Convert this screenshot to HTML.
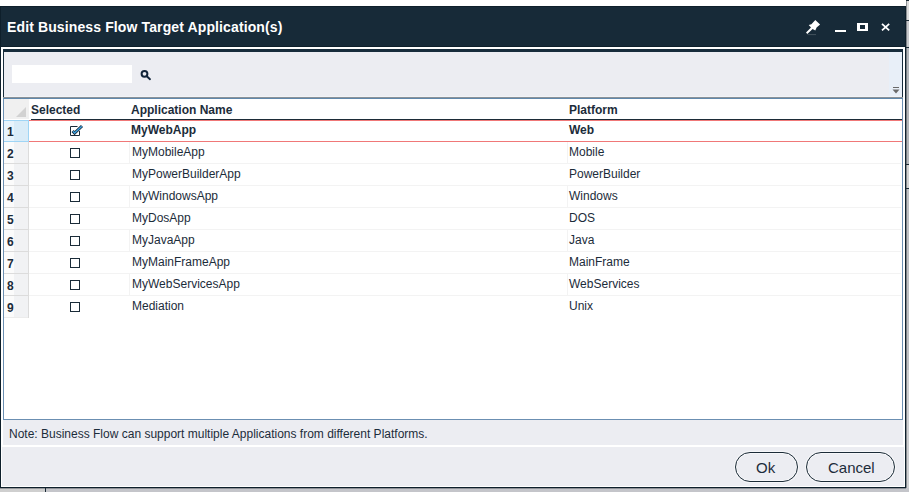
<!DOCTYPE html>
<html><head><meta charset="utf-8">
<style>
*{margin:0;padding:0;box-sizing:border-box}
html,body{width:909px;height:492px;overflow:hidden;background:#fff;font-family:"Liberation Sans",sans-serif}
.a{position:absolute}
.t{position:absolute;white-space:nowrap;font-size:12px;line-height:14px;color:#1c2c3a}
.b{font-weight:bold}
</style></head><body>
<div class="a" style="left:906px;top:0px;width:3px;height:1px;background:#1a2a35"></div>
<div class="a" style="left:906px;top:1px;width:3px;height:19px;background:#dcdcdc"></div>
<div class="a" style="left:906px;top:20px;width:3px;height:1px;background:#1a2a35"></div>
<div class="a" style="left:906px;top:21px;width:3px;height:26px;background:#c8c9cc"></div>
<div class="a" style="left:906px;top:47px;width:3px;height:1px;background:#1a2a35"></div>
<div class="a" style="left:906px;top:48px;width:3px;height:116px;background:#b4b7bb"></div>
<div class="a" style="left:906px;top:164px;width:3px;height:1px;background:#1a2a35"></div>
<div class="a" style="left:906px;top:165px;width:3px;height:23px;background:#d2d2d2"></div>
<div class="a" style="left:906px;top:188px;width:3px;height:1px;background:#1a2a35"></div>
<div class="a" style="left:906px;top:189px;width:3px;height:181px;background:#bfc1c5"></div>
<div class="a" style="left:906px;top:370px;width:3px;height:122px;background:#cfd0d2"></div>
<div class="a" style="left:906px;top:0;width:1px;height:492px;background:rgba(40,50,60,.45)"></div>
<div class="a" style="left:0;top:488px;width:909px;height:4px;background:#cfcfcf"></div>
<div class="a" style="left:46px;top:488px;width:863px;height:4px;background:#c4c5ca"></div>
<div class="a" style="left:0;top:488px;width:906px;height:1px;background:rgba(40,50,60,.35)"></div>
<div class="a" style="left:45px;top:488px;width:1px;height:4px;background:#1a2a35"></div>
<div class="a" style="left:0;top:6px;width:906px;height:482px;background:#0e1f2b"></div>
<div class="a" style="left:1px;top:7px;width:904px;height:39px;background:#172a38"></div>
<div class="a" style="left:1px;top:47px;width:904px;height:440px;background:#fff"></div>
<div class="t b" style="left:7px;top:19px;font-size:14px;line-height:16px;color:#fff;letter-spacing:0.12px">Edit Business Flow Target Application(s)</div>
<svg class="a" style="left:803px;top:17px" width="20" height="20" viewBox="0 0 20 20"><path d="M12.3 3L17.1 7.5L13.6 10.6L12.3 13.5L9.6 12L4.3 17L3 15.6L8 10.6L5.7 8L8.4 7.3Z" fill="#fff"/><path d="M4.5 17.6H13" stroke="#56646e" stroke-width="0.7"/></svg>
<div class="a" style="left:835px;top:30px;width:11px;height:2px;background:#fff"></div>
<div class="a" style="left:857px;top:23px;width:11px;height:8px;border-style:solid;border-color:#fff;border-width:2px 3px"></div>
<svg class="a" style="left:880px;top:22px" width="11" height="10" viewBox="0 0 11 10"><path d="M2 1.8L9.2 8.4M9.2 1.8L2 8.4" stroke="#fff" stroke-width="1.8"/></svg>
<div class="a" style="left:3px;top:49px;width:900px;height:371px;background:#172c3c"></div>
<div class="a" style="left:4px;top:52px;width:898px;height:45px;background:#ecedf2"></div>
<div class="a" style="left:889px;top:52px;width:13px;height:45px;background:#e8eff8"></div>
<div class="a" style="left:12px;top:65px;width:120px;height:18px;background:#fff"></div>
<svg class="a" style="left:138px;top:67px" width="16" height="16" viewBox="0 0 16 16"><circle cx="6.5" cy="6.8" r="2.9" fill="none" stroke="#12253a" stroke-width="2"/><path d="M8.8 9.2L12 12.2" stroke="#12253a" stroke-width="1.9" stroke-linecap="round"/></svg>
<div class="a" style="left:893px;top:87px;width:6px;height:1px;background:#6a6a6a"></div>
<svg class="a" style="left:892px;top:89px" width="8" height="6" viewBox="0 0 8 6"><path d="M0.5 0.5H7.5L4 4.5Z" fill="#6a6a6a"/></svg>
<div class="a" style="left:3px;top:97px;width:900px;height:323px;background:#6b8fb2"></div>
<div class="a" style="left:4px;top:99px;width:898px;height:320px;background:#fff"></div>
<div class="a" style="left:3px;top:97px;width:900px;height:1px;background:#8a9197"></div>
<div class="a" style="left:3px;top:98px;width:900px;height:1px;background:#5f87ab"></div>
<div class="a" style="left:4px;top:96px;width:898px;height:1px;background:#f1f3f7"></div>
<div class="a" style="left:4px;top:99px;width:25px;height:20px;background:#f0f0f0"></div>
<svg class="a" style="left:16px;top:107px" width="11" height="10" viewBox="0 0 11 10"><path d="M10 0V10H0Z" fill="#d2d2d2"/></svg>
<div class="t b" style="left:31px;top:103px">Selected</div>
<div class="t b" style="left:131px;top:103px">Application Name</div>
<div class="t b" style="left:569px;top:103px">Platform</div>
<div class="a" style="left:31px;top:119px;width:871px;height:1px;background:#1c2c38"></div>
<div class="a" style="left:4px;top:120px;width:25px;height:22px;background:#9fd5f5"></div>
<div class="a" style="left:4px;top:121px;width:24px;height:20px;background:linear-gradient(90deg,#e8f4fc 0,#e8f4fc 10px,#d9ecf8 10px)"></div>
<div class="a" style="left:29px;top:120px;width:873px;height:1px;background:#f07878"></div>
<div class="a" style="left:29px;top:141px;width:873px;height:1px;background:#f07878"></div>
<svg class="a" style="left:66px;top:121px" width="22" height="18" viewBox="0 0 22 18"><path d="M11.5 5.5H4.5V14.5H13.5V10" fill="none" stroke="#1a2b38" stroke-width="1"/><path d="M6.6 10L8.6 12.2L16 5" fill="none" stroke="#1a2b38" stroke-width="3"/><path d="M7 10.3L8.6 12L15.8 5.2" fill="none" stroke="#3aa0e0" stroke-width="1.4"/></svg>
<div class="t b" style="left:7px;top:125px">1</div>
<div class="t b" style="left:131px;top:123px">MyWebApp</div>
<div class="t b" style="left:569px;top:123px">Web</div>
<div class="a" style="left:4px;top:142px;width:25px;height:22px;background:#dcdcdc"></div>
<div class="a" style="left:4px;top:142px;width:24px;height:21px;background:linear-gradient(90deg,#fbfbfb 0,#fbfbfb 10px,#f1f2f4 10px)"></div>
<div class="a" style="left:29px;top:163px;width:872px;height:1px;background:#f3f3f3"></div>
<div class="a" style="left:129px;top:142px;width:1px;height:21px;background:#f3f3f3"></div>
<div class="a" style="left:567px;top:142px;width:1px;height:21px;background:#f3f3f3"></div>
<div class="a" style="left:70px;top:148px;width:10px;height:10px;border:1px solid #1a2b38"></div>
<div class="t b" style="left:7px;top:147px">2</div>
<div class="t" style="left:132px;top:145px">MyMobileApp</div>
<div class="t" style="left:569px;top:145px">Mobile</div>
<div class="a" style="left:4px;top:164px;width:25px;height:22px;background:#dcdcdc"></div>
<div class="a" style="left:4px;top:164px;width:24px;height:21px;background:linear-gradient(90deg,#fbfbfb 0,#fbfbfb 10px,#f1f2f4 10px)"></div>
<div class="a" style="left:29px;top:185px;width:872px;height:1px;background:#f3f3f3"></div>
<div class="a" style="left:70px;top:170px;width:10px;height:10px;border:1px solid #1a2b38"></div>
<div class="t b" style="left:7px;top:169px">3</div>
<div class="t" style="left:132px;top:167px">MyPowerBuilderApp</div>
<div class="t" style="left:569px;top:167px">PowerBuilder</div>
<div class="a" style="left:4px;top:186px;width:25px;height:22px;background:#dcdcdc"></div>
<div class="a" style="left:4px;top:186px;width:24px;height:21px;background:linear-gradient(90deg,#fbfbfb 0,#fbfbfb 10px,#f1f2f4 10px)"></div>
<div class="a" style="left:29px;top:207px;width:872px;height:1px;background:#f3f3f3"></div>
<div class="a" style="left:129px;top:186px;width:1px;height:21px;background:#f3f3f3"></div>
<div class="a" style="left:567px;top:186px;width:1px;height:21px;background:#f3f3f3"></div>
<div class="a" style="left:70px;top:192px;width:10px;height:10px;border:1px solid #1a2b38"></div>
<div class="t b" style="left:7px;top:191px">4</div>
<div class="t" style="left:132px;top:189px">MyWindowsApp</div>
<div class="t" style="left:569px;top:189px">Windows</div>
<div class="a" style="left:4px;top:208px;width:25px;height:22px;background:#dcdcdc"></div>
<div class="a" style="left:4px;top:208px;width:24px;height:21px;background:linear-gradient(90deg,#fbfbfb 0,#fbfbfb 10px,#f1f2f4 10px)"></div>
<div class="a" style="left:29px;top:229px;width:872px;height:1px;background:#f3f3f3"></div>
<div class="a" style="left:70px;top:214px;width:10px;height:10px;border:1px solid #1a2b38"></div>
<div class="t b" style="left:7px;top:213px">5</div>
<div class="t" style="left:132px;top:211px">MyDosApp</div>
<div class="t" style="left:569px;top:211px">DOS</div>
<div class="a" style="left:4px;top:230px;width:25px;height:22px;background:#dcdcdc"></div>
<div class="a" style="left:4px;top:230px;width:24px;height:21px;background:linear-gradient(90deg,#fbfbfb 0,#fbfbfb 10px,#f1f2f4 10px)"></div>
<div class="a" style="left:29px;top:251px;width:872px;height:1px;background:#f3f3f3"></div>
<div class="a" style="left:129px;top:230px;width:1px;height:21px;background:#f3f3f3"></div>
<div class="a" style="left:567px;top:230px;width:1px;height:21px;background:#f3f3f3"></div>
<div class="a" style="left:70px;top:236px;width:10px;height:10px;border:1px solid #1a2b38"></div>
<div class="t b" style="left:7px;top:235px">6</div>
<div class="t" style="left:132px;top:233px">MyJavaApp</div>
<div class="t" style="left:569px;top:233px">Java</div>
<div class="a" style="left:4px;top:252px;width:25px;height:22px;background:#dcdcdc"></div>
<div class="a" style="left:4px;top:252px;width:24px;height:21px;background:linear-gradient(90deg,#fbfbfb 0,#fbfbfb 10px,#f1f2f4 10px)"></div>
<div class="a" style="left:29px;top:273px;width:872px;height:1px;background:#f3f3f3"></div>
<div class="a" style="left:70px;top:258px;width:10px;height:10px;border:1px solid #1a2b38"></div>
<div class="t b" style="left:7px;top:257px">7</div>
<div class="t" style="left:132px;top:255px">MyMainFrameApp</div>
<div class="t" style="left:569px;top:255px">MainFrame</div>
<div class="a" style="left:4px;top:274px;width:25px;height:22px;background:#dcdcdc"></div>
<div class="a" style="left:4px;top:274px;width:24px;height:21px;background:linear-gradient(90deg,#fbfbfb 0,#fbfbfb 10px,#f1f2f4 10px)"></div>
<div class="a" style="left:29px;top:295px;width:872px;height:1px;background:#f3f3f3"></div>
<div class="a" style="left:129px;top:274px;width:1px;height:21px;background:#f3f3f3"></div>
<div class="a" style="left:567px;top:274px;width:1px;height:21px;background:#f3f3f3"></div>
<div class="a" style="left:70px;top:280px;width:10px;height:10px;border:1px solid #1a2b38"></div>
<div class="t b" style="left:7px;top:279px">8</div>
<div class="t" style="left:132px;top:277px">MyWebServicesApp</div>
<div class="t" style="left:569px;top:277px">WebServices</div>
<div class="a" style="left:4px;top:296px;width:25px;height:22px;background:#ececec"></div>
<div class="a" style="left:4px;top:296px;width:24px;height:21px;background:linear-gradient(90deg,#fbfbfb 0,#fbfbfb 10px,#f1f2f4 10px)"></div>
<div class="a" style="left:28px;top:296px;width:1px;height:22px;background:#dcdcdc"></div>
<div class="a" style="left:70px;top:302px;width:10px;height:10px;border:1px solid #1a2b38"></div>
<div class="t b" style="left:7px;top:301px">9</div>
<div class="t" style="left:132px;top:299px">Mediation</div>
<div class="t" style="left:569px;top:299px">Unix</div>
<div class="a" style="left:3px;top:420px;width:900px;height:25px;background:#ecedf2"></div>
<div class="t" style="left:9px;top:427px">Note: Business Flow can support multiple Applications from different Platforms.</div>
<div class="a" style="left:2px;top:447px;width:902px;height:39px;background:#ecedf2"></div>
<div class="a" style="left:735px;top:452px;width:63px;height:30px;border:1px solid #1c2c38;border-radius:15px;box-shadow:0 0 0 1px rgba(255,255,255,.55),inset 0 0 0 1px rgba(255,255,255,.55)"></div>
<div class="t" style="left:756px;top:459px;font-size:15px;line-height:17px">Ok</div>
<div class="a" style="left:806px;top:452px;width:89px;height:30px;border:1px solid #1c2c38;border-radius:15px;box-shadow:0 0 0 1px rgba(255,255,255,.55),inset 0 0 0 1px rgba(255,255,255,.55)"></div>
<div class="t" style="left:828px;top:459px;font-size:15px;line-height:17px">Cancel</div>
</body></html>
